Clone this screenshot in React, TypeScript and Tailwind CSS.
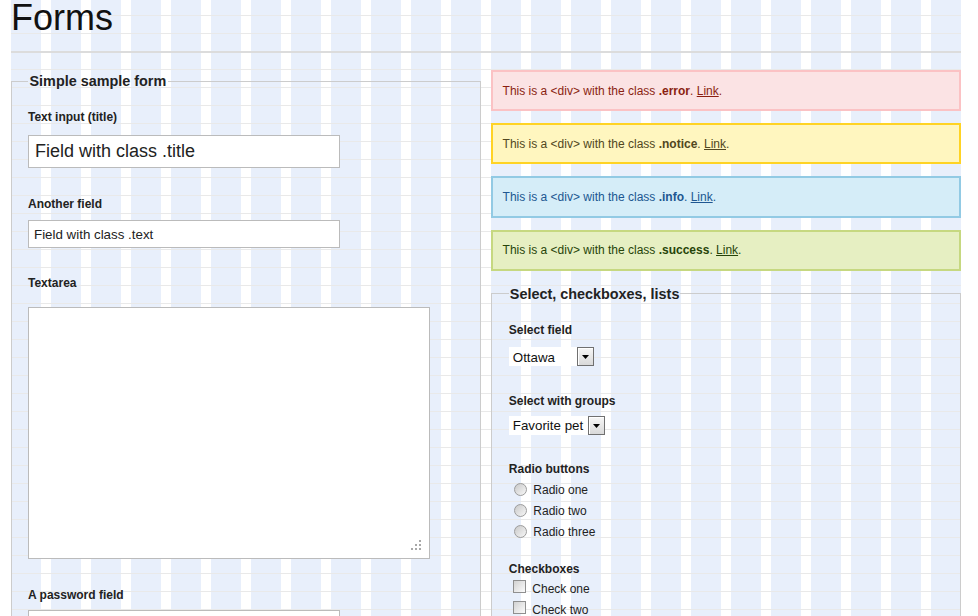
import React from "react";

const messages = [
  { name: ".error", box: "border-[#fbc2c4] bg-[#fbe3e4] text-[#8a1f11]" },
  { name: ".notice", box: "border-[#ffd324] bg-[#fff6bf] text-[#514721]" },
  { name: ".info", box: "border-[#92cae4] bg-[#d5edf8] text-[#205791]" },
  { name: ".success", box: "border-[#c6d880] bg-[#e6efc2] text-[#264409]" },
];

function Label({ children, className = "" }: { children: React.ReactNode; className?: string }) {
  return <label className={`block text-[12px] leading-[18px] font-bold text-[#222] ${className}`}>{children}</label>;
}

function FakeSelect({ value, width }: { value: string; width: string }) {
  return (
    <div className={`flex h-[19px] items-center bg-white pl-[4px] text-[13.33px] text-[#111] ${width}`}>
      <span className="mt-[1px] flex-1 leading-none">{value}</span>
      <span className="flex h-full w-[17px] items-center justify-center border border-[#707070] bg-[linear-gradient(#f6f6f6,#d9d9d9)] shadow-[inset_1px_1px_0_#fff]">
        <svg width="7" height="4" viewBox="0 0 7 4" className="mt-[1px]">
          <polygon points="0,0 7,0 3.5,4" fill="#000" />
        </svg>
      </span>
    </div>
  );
}

function Radio({ label }: { label: string }) {
  return (
    <div className="leading-[21px] text-[12px] text-[#222]">
      <span className="ml-[5px] mr-[6.5px] inline-block h-[13px] w-[13px] rounded-full border border-[#9c9c9c] bg-[linear-gradient(135deg,#c9c9c9,#f7f7f7)] align-[-2px]" />
      {label}
    </div>
  );
}

function Check({ label }: { label: string }) {
  return (
    <div className="leading-[20.7px] text-[12px] text-[#222]">
      <span className="ml-[4px] mr-[6.5px] inline-block h-[13px] w-[13px] border border-[#8f8f8f] bg-[linear-gradient(135deg,#d2d2d2,#fbfbfb)] align-[0px]" />
      {label}
    </div>
  );
}

export default function App() {
  return (
    <div className="h-[616px] overflow-hidden bg-white font-['Liberation_Sans',Arial,sans-serif] text-[12px] text-[#222]">
      <div className="ml-[11px] min-h-[616px] w-[950px] bg-[linear-gradient(to_bottom,transparent_15px,#e9e9e9_15px,#e9e9e9_16px,transparent_16px),linear-gradient(to_right,#e8effb_30px,transparent_30px)] bg-[length:40px_18px]">
        <h1 className="text-[36px] leading-none font-normal text-[#111]">Forms</h1>
        <hr className="mt-[15px] mb-[17px] h-[2px] border-0 bg-[#dcdcdc]" />

        <div className="flex items-start gap-[10px]">
          {/* left column */}
          <div className="w-[470px]">
            <fieldset className="m-0 mt-[2px] border border-[#ccc] pt-[18px] pr-[16.8px] pb-[18px] pl-[16px]">
              <legend className="px-[1.5px] text-[14.4px] leading-[18px] font-bold text-[#222]">Simple sample form</legend>

              <Label>Text input (title)</Label>
              <input
                defaultValue="Field with class .title"
                className="mt-[9px] block h-[33px] w-[312px] border border-[#bbb] bg-white px-[6px] text-[18px] text-[#222] outline-none"
              />

              <Label className="mt-[27px]">Another field</Label>
              <input
                defaultValue="Field with class .text"
                className="mt-[7px] block h-[28px] w-[312px] border border-[#bbb] bg-white px-[5px] text-[13.33px] text-[#222] outline-none"
              />

              <Label className="mt-[25.5px]">Textarea</Label>
              <div className="relative mt-[15px] h-[252px] w-[402px] border border-[#bbb] bg-white">
                <textarea className="block h-full w-full resize-none p-[5px] outline-none" />
                <svg width="10" height="10" viewBox="0 0 10 10" className="absolute right-[8px] bottom-[8px]">
                  <rect x="8" y="0" width="2" height="2" fill="#a8a8a8" />
                  <rect x="4" y="4" width="2" height="2" fill="#a8a8a8" />
                  <rect x="8" y="4" width="2" height="2" fill="#a8a8a8" />
                  <rect x="0" y="8" width="2" height="2" fill="#a8a8a8" />
                  <rect x="4" y="8" width="2" height="2" fill="#a8a8a8" />
                  <rect x="8" y="8" width="2" height="2" fill="#a8a8a8" />
                </svg>
              </div>

              <Label className="mt-[27px]">A password field</Label>
              <input
                type="password"
                className="mt-[6px] block h-[28px] w-[312px] border border-[#bbb] bg-white px-[5px] text-[13.33px] outline-none"
              />
            </fieldset>
          </div>

          {/* right column */}
          <div className="w-[470px]">
            <div className="flex flex-col gap-[12px]">
              {messages.map((m) => (
                <div key={m.name} className={`border-2 p-[9.6px] text-[12px] leading-[18px] ${m.box}`}>
                  This is a &lt;div&gt; with the class <strong>{m.name}</strong>. <a className="underline">Link</a>.
                </div>
              ))}
            </div>

            <fieldset className="m-0 mt-[14px] border border-[#ccc] px-[16.8px] pt-[18px] pb-[18px]">
              <legend className="px-[1px] text-[14.4px] leading-[18px] font-bold text-[#222]">Select, checkboxes, lists</legend>

              <Label>Select field</Label>
              <div className="mt-[8.5px]">
                <FakeSelect value="Ottawa" width="w-[85px]" />
              </div>

              <Label className="mt-[25.5px]">Select with groups</Label>
              <div className="mt-[6px]">
                <FakeSelect value="Favorite pet" width="w-[96px]" />
              </div>

              <Label className="mt-[25.5px]">Radio buttons</Label>
              <div className="mt-[2px]">
                <Radio label="Radio one" />
                <Radio label="Radio two" />
                <Radio label="Radio three" />
              </div>

              <Label className="mt-[16.5px]">Checkboxes</Label>
              <div className="mt-[1.5px]">
                <Check label="Check one" />
                <Check label="Check two" />
              </div>
            </fieldset>
          </div>
        </div>
      </div>
    </div>
  );
}
